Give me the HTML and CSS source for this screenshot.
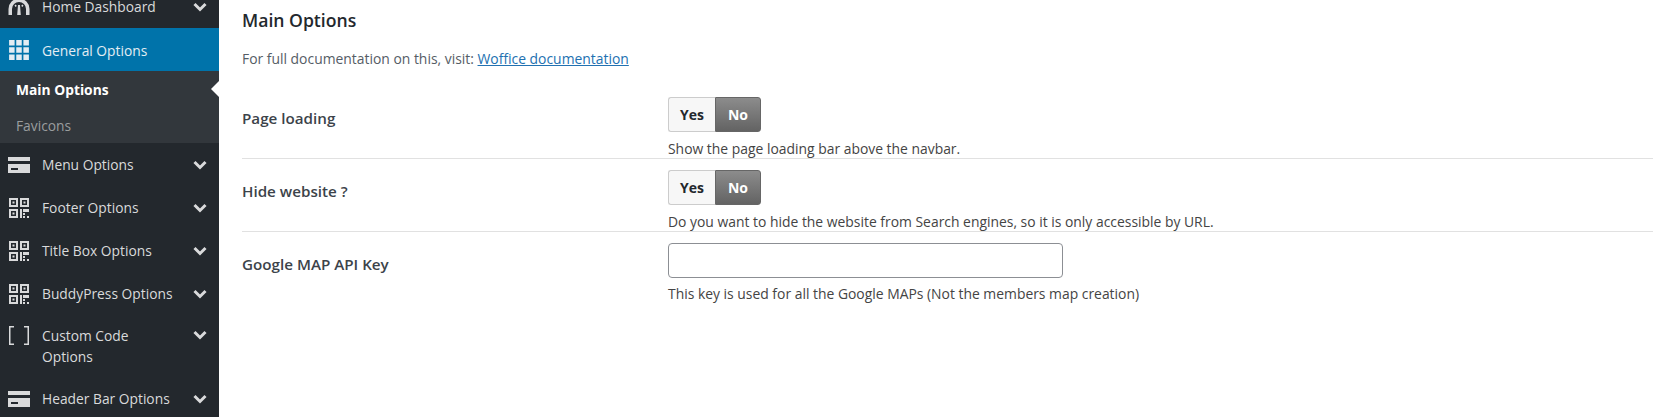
FILE: index.html
```html
<!DOCTYPE html>
<html lang="en">

<head>
    <meta charset="utf-8">
    <title>Main Options</title>
    <link rel="stylesheet" href="styles.css">
</head>

<body>
    <nav class="sidebar">
        <a class="item">
            <svg class="icon" viewBox="0 0 22 22"><path d="M11 2.500A10.500 10.500 0 0 0 .5 13v6H4v-6a7 7 0 0 1 14 0v6h3.500v-6A10.500 10.500 0 0 0 11 2.500z" fill="#d9dadb"/><path d="M10 9h2l.8 10H9.200zM6.500 9.500l1.300-1 1 1.500-1.300 1zM15.500 9.500l-1.300-1-1 1.500 1.300 1z" fill="#d9dadb"/></svg>
            <span class="label">Home Dashboard</span>
            <svg class="chev" viewBox="0 0 14 10"><path d="M1.500 2 7 7.500 12.500 2" /></svg>
        </a>
        <a class="item current">
            <svg class="icon" viewBox="0 0 20 20"><path d="M1 1h5v5H1zM7.500 1h5v5h-5zM14 1h5v5h-5zM1 7.500h5v5H1zM7.500 7.500h5v5h-5zM14 7.500h5v5h-5zM1 14h5v5H1zM7.500 14h5v5h-5zM14 14h5v5h-5z" fill="#e3edf3"/></svg>
            <span class="label">General Options</span>
        </a>
        <div class="submenu">
            <a class="sub active">Main Options</a>
            <a class="sub">Favicons</a>
        </div>
        <a class="item">
            <svg class="icon" viewBox="0 0 22 22"><path d="M0 3h22v4H0zM0 10h22v9H0z" fill="#d9dadb"/><path d="M3 14h7v2H3z" fill="#23282d"/></svg>
            <span class="label">Menu Options</span>
            <svg class="chev" viewBox="0 0 14 10"><path d="M1.500 2 7 7.500 12.500 2" /></svg>
        </a>
        <a class="item">
            <svg class="icon" viewBox="0 0 22 22"><use href="#qr"/></svg>
            <span class="label">Footer Options</span>
            <svg class="chev" viewBox="0 0 14 10"><path d="M1.500 2 7 7.500 12.500 2" /></svg>
        </a>
        <a class="item">
            <svg class="icon" viewBox="0 0 22 22"><use href="#qr"/></svg>
            <span class="label">Title Box Options</span>
            <svg class="chev" viewBox="0 0 14 10"><path d="M1.500 2 7 7.500 12.500 2" /></svg>
        </a>
        <a class="item">
            <svg class="icon" viewBox="0 0 22 22"><use href="#qr"/></svg>
            <span class="label">BuddyPress Options</span>
            <svg class="chev" viewBox="0 0 14 10"><path d="M1.500 2 7 7.500 12.500 2" /></svg>
        </a>
        <a class="item tall">
            <svg class="icon" viewBox="0 0 22 22"><path d="M1 1h5v1.500H2.500v16H6V20H1zM21 1h-5v1.500h3.500v16H16V20h5z" fill="#d9dadb"/></svg>
            <span class="label">Custom Code Options</span>
            <svg class="chev" viewBox="0 0 14 10"><path d="M1.500 2 7 7.500 12.500 2" /></svg>
        </a>
        <a class="item">
            <svg class="icon" viewBox="0 0 22 22"><path d="M0 3h22v4H0zM0 10h22v9H0z" fill="#d9dadb"/><path d="M3 14h7v2H3z" fill="#23282d"/></svg>
            <span class="label">Header Bar Options</span>
            <svg class="chev" viewBox="0 0 14 10"><path d="M1.500 2 7 7.500 12.500 2" /></svg>
        </a>
    </nav>

    <main class="content">
        <h2 class="title">Main Options</h2>
        <p class="intro">For full documentation on this, visit: <a href="#">Woffice documentation</a></p>

        <section class="row">
            <div class="name">Page loading</div>
            <div class="field">
                <div class="switch"><span class="yes">Yes</span><span class="no">No</span></div>
                <p class="help">Show the page loading bar above the navbar.</p>
            </div>
        </section>

        <section class="row">
            <div class="name">Hide website ?</div>
            <div class="field">
                <div class="switch"><span class="yes">Yes</span><span class="no">No</span></div>
                <p class="help">Do you want to hide the website from Search engines, so it is only accessible by URL.</p>
            </div>
        </section>

        <section class="row last">
            <div class="name">Google MAP API Key</div>
            <div class="field">
                <input class="text" type="text">
                <p class="help">This key is used for all the Google MAPs (Not the members map creation)</p>
            </div>
        </section>
    </main>

    <svg class="defs" width="0" height="0">
        <symbol id="qr" viewBox="0 0 22 22">
            <path fill="#d9dadb" fill-rule="evenodd" d="M1 1h9v9H1zM3 3v5h5V3zM12 1h9v9h-9zM14 3v5h5V3zM1 12h9v9H1zM3 14v5h5v-5zM12 12h2v9h-2zM15 12h6v3h-6zM15 16h2v2h-2zM15 19h2v2h-2zM19 19h2v2h-2z"/>
            <path fill="#d9dadb" d="M4.500 4.500h2v2h-2zM15.500 4.500h2v2h-2zM4.500 15.500h2v2h-2z"/>
        </symbol>
    </svg>
</body>

</html>
```

FILE: styles.css
```css
html,
body {
    margin: 0;
    height: 417px;
    overflow: hidden;
    background-color: #fff;
}

body {
    display: flex;
    font-family: "Open Sans", sans-serif;
    font-size: 13.9px;
    color: #444;
}

.defs {
    display: none;
}

/* sidebar */
.sidebar {
    width: 219px;
    flex-shrink: 0;
    margin-top: -15px;
    background-color: #23282d;
}

.item {
    display: flex;
    align-items: center;
    height: 43px;
    padding: 0 12px 0 8px;
    box-sizing: border-box;
    color: #d9dadb;
    font-size: 13.8px;
}

.item.tall {
    height: 62px;
    align-items: flex-start;
    padding-top: 10px;
}

.item.current {
    background-color: #0073aa;
    color: #e3edf3;
    padding-top: 1px;
}

.icon {
    width: 22px;
    height: 22px;
    flex-shrink: 0;
    margin-right: 12px;
}

.label {
    flex: 1;
    line-height: 21px;
}

.item.tall .label {
    padding-right: 20px;
}

.chev {
    width: 14px;
    height: 10px;
    fill: none;
    stroke: #d9dadb;
    stroke-width: 3;
}

.item.tall .chev {
    margin-top: 5px;
}

.submenu {
    height: 72px;
    background-color: #32373c;
    position: relative;
}

.sub {
    display: block;
    height: 36px;
    line-height: 38px;
    padding-left: 16px;
    font-size: 13.8px;
    color: #9a9d9f;
}

.sub.active {
    color: #fff;
    font-weight: 700;
}

.sub.active::after {
    content: "";
    position: absolute;
    right: 0;
    top: 10px;
    border: 8px solid transparent;
    border-right-color: #fff;
    border-left-width: 0;
}

/* main */
.content {
    flex: 1;
    padding-left: 23px;
}

.title {
    margin: 0;
    padding-top: 9px;
    font-size: 17.6px;
    line-height: 22px;
    font-weight: 600;
    color: #23282d;
}

.intro {
    margin: 17px 0 0;
    line-height: 22px;
    color: #555d66;
}

.intro a {
    color: #2271b1;
}

.row {
    display: flex;
    height: 61px;
    padding-top: 11px;
    border-bottom: 1px solid #e1e1e1;
}

.row:first-of-type {
    margin-top: 16px;
}

.row.last {
    border-bottom: 0;
}

.name {
    width: 426px;
    flex-shrink: 0;
    padding-top: 10px;
    font-size: 15.2px;
    line-height: 22px;
    font-weight: 600;
    color: #3c434a;
}

.switch {
    display: flex;
    width: 93px;
    height: 35px;
    font-size: 14px;
    font-weight: 700;
    line-height: 33px;
    text-align: center;
}

.yes {
    flex: 1;
    border: 1px solid #ccc;
    border-right: 0;
    border-radius: 3px 0 0 3px;
    background-color: #f7f7f7;
    color: #23282d;
}

.no {
    width: 44px;
    border: 1px solid #666;
    border-radius: 0 3px 3px 0;
    background: linear-gradient(#8c8c8c, #636363);
    color: #fff;
}

.help {
    margin: 7px 0 0;
    line-height: 20px;
    color: #444;
}

.text {
    display: block;
    width: 395px;
    height: 35px;
    margin: 0 0 6px;
    padding: 0 8px;
    box-sizing: border-box;
    border: 1px solid #8c8f94;
    border-radius: 4px;
    background-color: #fff;
}

.text + .help {
    margin-top: 6px;
}
```
